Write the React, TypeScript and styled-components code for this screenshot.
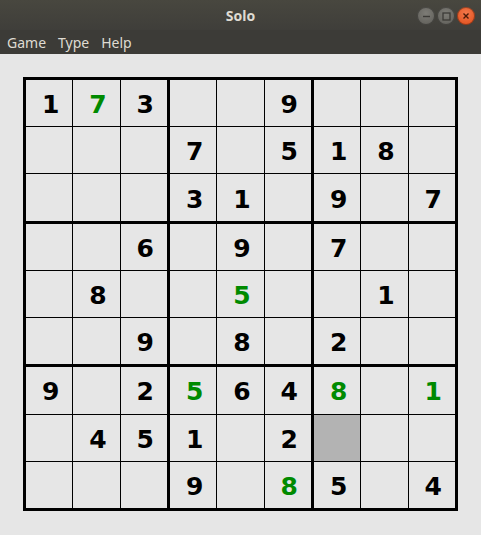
import styled, { createGlobalStyle } from "styled-components";

const GlobalStyle = createGlobalStyle`
  html, body {
    margin: 0;
    padding: 0;
    background: #e6e6e6;
  }
`;

const Window = styled.div`
  width: 481px;
  height: 535px;
  display: flex;
  flex-direction: column;
  background: #e6e6e6;
  overflow: hidden;
`;

const TitleBar = styled.div`
  height: 30px;
  display: flex;
  align-items: center;
  justify-content: center;
  position: relative;
  background: linear-gradient(#48473f 0%, #3f3e3a 100%);
  color: #dfdbd2;
  font-family: "Noto Sans", "DejaVu Sans", sans-serif;
  font-weight: bold;
  font-size: 14px;
`;

const TitleButtons = styled.div`
  position: absolute;
  right: 6px;
  top: 7px;
  display: flex;
  gap: 2px;
`;

const WinButton = styled.div<{ $close?: boolean }>`
  width: 18px;
  height: 18px;
  border-radius: 50%;
  display: flex;
  align-items: center;
  justify-content: center;
  background: ${(p) =>
    p.$close
      ? "radial-gradient(circle at 50% 35%, #f2784b, #df4a16)"
      : "radial-gradient(circle at 50% 35%, #7d7c76, #5c5b56)"};
  box-shadow: inset 0 0 0 1px rgba(0, 0, 0, 0.35);
`;

const MenuBar = styled.div`
  height: 24px;
  display: flex;
  align-items: center;
  padding: 0 1px;
  background: #3c3b37;
  font-family: "Noto Sans", "DejaVu Sans", sans-serif;
  font-size: 14px;
  color: #dfdbd2;
`;

const MenuItem = styled.span`
  padding: 0 6px;
`;

const Content = styled.div`
  flex: 1;
  padding: 23px;
`;

const Board = styled.div`
  width: 435px;
  height: 434px;
  box-sizing: border-box;
  padding: 3px;
  background: #000;
  display: grid;
  grid-template-columns: repeat(3, 1fr);
  grid-template-rows: repeat(3, 1fr);
  gap: 3px;
`;

const Box = styled.div`
  display: grid;
  grid-template-columns: repeat(3, 1fr);
  grid-template-rows: repeat(3, 1fr);
  gap: 1px;
  background: #000;
`;

const Cell = styled.div<{ $user?: boolean; $hl?: boolean }>`
  display: flex;
  align-items: center;
  justify-content: center;
  background: ${(p) => (p.$hl ? "#b3b3b3" : "#e6e6e6")};
  color: ${(p) => (p.$user ? "#008a00" : "#000")};
  font-family: "DejaVu Sans", sans-serif;
  font-weight: bold;
  font-size: 25px;
  line-height: 1;
  padding: 3px 0 0 3px;
  box-sizing: border-box;
`;

// '.' empty, 'g' prefix = user entered, '#' highlighted
const rows = [
  "1 g7 3 . . 9 . . .",
  ". . . 7 . 5 1 8 .",
  ". . . 3 1 . 9 . 7",
  ". . 6 . 9 . 7 . .",
  ". 8 . . g5 . . 1 .",
  ". . 9 . 8 . 2 . .",
  "9 . 2 g5 6 4 g8 . g1",
  ". 4 5 1 . 2 # . .",
  ". . . 9 . g8 5 . 4",
].map((r) => r.split(" "));

function App() {
  const boxes = [];
  for (let b = 0; b < 9; b++) {
    const br = Math.floor(b / 3) * 3;
    const bc = (b % 3) * 3;
    const cells = [];
    for (let i = 0; i < 9; i++) {
      const v = rows[br + Math.floor(i / 3)][bc + (i % 3)];
      const user = v.startsWith("g");
      const digit = v === "." || v === "#" ? "" : v.replace("g", "");
      cells.push(
        <Cell key={i} $user={user} $hl={v === "#"}>
          {digit}
        </Cell>
      );
    }
    boxes.push(<Box key={b}>{cells}</Box>);
  }

  return (
    <>
      <GlobalStyle />
      <Window>
        <TitleBar>
          Solo
          <TitleButtons>
            <WinButton>
              <svg width="9" height="9" viewBox="0 0 9 9">
                <path d="M1 4.5h7" stroke="#3c3b37" strokeWidth="1.4" />
              </svg>
            </WinButton>
            <WinButton>
              <svg width="9" height="9" viewBox="0 0 9 9">
                <rect x="1" y="1" width="7" height="7" fill="none" stroke="#3c3b37" strokeWidth="1.3" />
              </svg>
            </WinButton>
            <WinButton $close>
              <svg width="8" height="8" viewBox="0 0 8 8">
                <path d="M1.5 1.5l5 5M6.5 1.5l-5 5" stroke="#4a1a08" strokeWidth="1.4" />
              </svg>
            </WinButton>
          </TitleButtons>
        </TitleBar>
        <MenuBar>
          <MenuItem>Game</MenuItem>
          <MenuItem>Type</MenuItem>
          <MenuItem>Help</MenuItem>
        </MenuBar>
        <Content>
          <Board>{boxes}</Board>
        </Content>
      </Window>
    </>
  );
}

export default App;
